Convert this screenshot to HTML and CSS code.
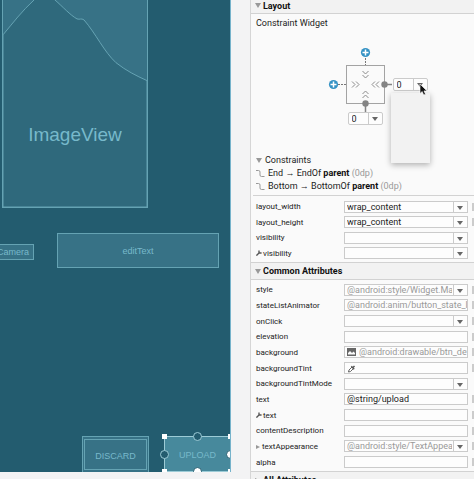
FILE: index.html
```html
<!DOCTYPE html>
<html lang="en">
<head>
    <meta charset="UTF-8">
    <title>Layout Editor</title>
    <link rel="stylesheet" href="styles.css">
</head>
<body>
    <main class="surface">
        <div class="blueprint">
            <div class="node image-view">
                <svg class="mountain" viewBox="0 0 144 208" preserveAspectRatio="none">
                    <path d="M0 35C10 23 19 11 31 0L40 -10L52 0C60 7 67 15 74 19C77 20 78 18 81 20C93 34 101 52 113 63C123 71 133 76 144 81V208H0Z"/>
                </svg>
                <span class="image-label">ImageView</span>
            </div>
            <button class="node camera">Camera</button>
            <input class="node edit-text" type="text" value="editText" aria-label="editText">
            <div class="node discard"><button>DISCARD</button></div>
            <div class="node upload">
                <button>UPLOAD</button>
                <i class="corner top left"></i>
                <i class="corner top right"></i>
                <i class="corner bottom left"></i>
                <i class="corner bottom right"></i>
                <i class="anchor anchor-top"></i>
                <i class="anchor anchor-left"></i>
                <i class="anchor anchor-right connected"></i>
                <i class="anchor anchor-bottom connected"></i>
            </div>
        </div>
    </main>

    <aside class="panel">
        <h2 class="section first"><span class="tri"></span>Layout</h2>
        <div class="widget-title">Constraint Widget</div>

        <div class="widget">
            <svg class="widget-box" width="65" height="66" viewBox="0 0 65 66">
                <rect x="18.500" y="19.500" width="38" height="38" fill="none" stroke="#a3a3a3"/>
                <path d="M37.500 12V19M10 38.500H18" stroke="#777" stroke-dasharray="2 1"/>
                <path d="M37.500 58V66M57 38.500H64" stroke="#848484" stroke-width="1.500"/>
                <circle cx="37.500" cy="57.500" r="3.200" fill="#848484"/>
                <circle cx="56.500" cy="38.500" r="3.200" fill="#848484"/>
                <circle cx="37.500" cy="6.500" r="4.600" fill="#3592c4"/>
                <circle cx="5.500" cy="38.500" r="4.600" fill="#3592c4"/>
                <path d="M37.500 3.500V9.500M34.500 6.500H40.500M5.500 35.500V41.500M2.500 38.500H8.500" stroke="#fff" stroke-width="1.500"/>
                <path d="M34.500 25L37.500 28L40.500 25M34.500 29L37.500 32L40.500 29M34.500 48L37.500 45L40.500 48M34.500 52L37.500 49L40.500 52M24 35.500L27 38.500L24 41.500M28 35.500L31 38.500L28 41.500M47 35.500L44 38.500L47 41.500M51 35.500L48 38.500L51 41.500" fill="none" stroke="#8c8c8c"/>
            </svg>
            <div class="combo margin-right">
                <select aria-label="Right margin"><option>0</option></select>
                <div class="popup"></div>
                <svg class="cursor" width="9" height="13" viewBox="0 0 9 13">
                    <path d="M1 1V10.500L3.200 8.500L4.700 12L6.500 11.200L5 7.900H8Z" fill="#111" stroke="#fff" stroke-width="0.600"/>
                </svg>
            </div>
            <div class="combo margin-bottom">
                <select aria-label="Bottom margin"><option>0</option></select>
            </div>
        </div>

        <div class="constraints">
            <div class="constraints-title"><span class="tri"></span>Constraints</div>
            <div class="constraint">
                <svg width="9" height="9" viewBox="0 0 9 9"><path d="M0 1.500H2.500Q4 1.500 4 3V6Q4 7.500 5.500 7.500H8.500" fill="none" stroke="#999"/></svg>
                <span>End → EndOf <b>parent</b> <span class="dim">(0dp)</span></span>
            </div>
            <div class="constraint">
                <svg width="9" height="9" viewBox="0 0 9 9"><path d="M0 1.500H2.500Q4 1.500 4 3V6Q4 7.500 5.500 7.500H8.500" fill="none" stroke="#999"/></svg>
                <span>Bottom → BottomOf <b>parent</b> <span class="dim">(0dp)</span></span>
            </div>
        </div>

        <div class="rows layout-rows">
            <div class="row">
                <label for="layout-width">layout_width</label>
                <div class="combo"><select id="layout-width"><option>wrap_content</option></select></div>
                <span class="flag"></span>
            </div>
            <div class="row">
                <label for="layout-height">layout_height</label>
                <div class="combo"><select id="layout-height"><option>wrap_content</option></select></div>
                <span class="flag"></span>
            </div>
            <div class="row">
                <label for="visibility">visibility</label>
                <div class="combo"><select id="visibility"><option></option></select></div>
            </div>
            <div class="row">
                <label for="tools-visibility"><svg class="wrench" width="6" height="6" viewBox="0 0 7 7"><path d="M0.500 6.500L3.500 3.500M3.500 0.500V3.500H6.500" fill="none" stroke="#555" stroke-width="1.600"/></svg>visibility</label>
                <div class="combo"><select id="tools-visibility"><option></option></select></div>
            </div>
        </div>

        <h2 class="section"><span class="tri"></span>Common Attributes</h2>

        <div class="rows common-rows">
            <div class="row">
                <label for="style">style</label>
                <div class="combo dim"><select id="style"><option>@android:style/Widget.Material.Button</option></select></div>
                <span class="flag"></span>
            </div>
            <div class="row">
                <label for="state-list">stateListAnimator</label>
                <input id="state-list" type="text" placeholder="@android:anim/button_state_list_anim">
                <span class="flag"></span>
            </div>
            <div class="row">
                <label for="on-click">onClick</label>
                <div class="combo"><select id="on-click"><option></option></select></div>
                <span class="flag"></span>
            </div>
            <div class="row">
                <label for="elevation">elevation</label>
                <input id="elevation" type="text">
                <span class="flag"></span>
            </div>
            <div class="row">
                <label for="background">background</label>
                <div class="icon-field">
                    <svg width="9" height="8" viewBox="0 0 9 8"><path d="M0 0H9V8H0Z" fill="#666"/><path d="M1 6.500V5L3 3L5 5L6.500 3.500L8 5V6.500Z" fill="#fafafa"/></svg>
                    <input id="background" type="text" placeholder="@android:drawable/btn_default_material">
                </div>
                <span class="flag"></span>
            </div>
            <div class="row">
                <label for="background-tint">backgroundTint</label>
                <div class="icon-field">
                    <svg width="9" height="9" viewBox="0 0 9 8"><path d="M1.500 7.500L2 5.500L5 2.500L6.500 4L3.500 7Z" fill="none" stroke="#555" stroke-width="0.900"/><path d="M4.300 1.800L7.200 4.700M5.800 3.200L7.500 1.500" stroke="#555" stroke-width="1.500"/></svg>
                    <input id="background-tint" type="text">
                </div>
                <span class="flag"></span>
            </div>
            <div class="row">
                <label for="tint-mode">backgroundTintMode</label>
                <div class="combo"><select id="tint-mode"><option></option></select></div>
            </div>
            <div class="row">
                <label for="text">text</label>
                <input id="text" type="text" value="@string/upload">
                <span class="flag"></span>
            </div>
            <div class="row">
                <label for="tools-text"><svg class="wrench" width="6" height="6" viewBox="0 0 7 7"><path d="M0.500 6.500L3.500 3.500M3.500 0.500V3.500H6.500" fill="none" stroke="#555" stroke-width="1.600"/></svg>text</label>
                <input id="tools-text" type="text">
                <span class="flag"></span>
            </div>
            <div class="row">
                <label for="description">contentDescription</label>
                <input id="description" type="text">
                <span class="flag"></span>
            </div>
            <div class="row">
                <label for="appearance"><span class="tri closed"></span>textAppearance</label>
                <div class="combo dim"><select id="appearance"><option>@android:style/TextAppearance.Material</option></select></div>
                <span class="flag"></span>
            </div>
            <div class="row">
                <label for="alpha">alpha</label>
                <input id="alpha" type="text">
                <span class="flag"></span>
            </div>
        </div>

        <h2 class="section"><span class="tri closed"></span>All Attributes</h2>
    </aside>
</body>
</html>
```

FILE: styles.css
```css
:root {
    --blueprint: #235c6f;
    --node: #377286;
    --node-line: #65a3b3;
    --node-text: #77b9cb;
    --panel: #fafafa;
    --line: #cbcbcb;
}

* {
    margin: 0;
    padding: 0;
    box-sizing: border-box;
}

body {
    display: flex;
    height: 100vh;
    overflow: hidden;
    background-color: #f3f3f4;
    font-family: Roboto, "Liberation Sans", sans-serif;
    font-size: 9px;
    color: #222;
}

button,
input,
select {
    font: inherit;
    color: inherit;
    border-radius: 0;
    outline: none;
}

/* design surface */
.surface {
    flex: 1;
    padding: 0 19px 7px 0;
}

.blueprint {
    position: relative;
    height: 100%;
    overflow: hidden;
    background-color: var(--blueprint);
    border-right: 1px solid #76b3cb;
    font-family: "Liberation Sans", sans-serif;
    color: var(--node-text);
}

.node {
    position: absolute;
    background-color: var(--node);
    border: 1px solid var(--node-line);
}

.image-view {
    left: 2px;
    top: -1px;
    width: 146px;
    height: 209px;
    display: flex;
    justify-content: center;
}

.mountain {
    position: absolute;
    width: 100%;
    height: 100%;
    fill: #2f697c;
    stroke: var(--node-line);
}

.image-label {
    position: relative;
    margin-top: 124px;
    font-size: 19px;
    line-height: 22px;
}

.camera {
    left: -10px;
    top: 244px;
    width: 44px;
    height: 16px;
    padding-right: 4px;
    text-align: right;
}

.edit-text {
    left: 57px;
    top: 233px;
    width: 162px;
    height: 35px;
    text-align: center;
}

.discard {
    left: 82px;
    bottom: -1px;
    width: 67px;
    height: 37px;
    padding: 2px 1px;
}

.discard button,
.upload button {
    width: 100%;
    height: 100%;
    padding-top: 2px;
    background: none;
    border: 1px solid var(--node-line);
}

.upload {
    left: 164px;
    bottom: 0;
    width: 67px;
    height: 36px;
    background-color: #47899c;
    border-color: #9ccbd6;
}

.upload button {
    border: none;
}

.corner {
    position: absolute;
    width: 5px;
    height: 5px;
    background-color: #fff;
}

.top { top: -3px; }
.bottom { bottom: -3px; }
.left { left: -3px; }
.right { right: -3px; }

.anchor {
    position: absolute;
    width: 9px;
    height: 9px;
    border: 1px solid #9ccbd6;
    border-radius: 50%;
    background-color: var(--blueprint);
}

.connected {
    background-color: #fff;
    border-color: var(--blueprint);
}

.anchor-top { top: -5px; left: 28px; }
.anchor-bottom { bottom: -5px; left: 28px; }
.anchor-left { top: 13px; left: -5px; }
.anchor-right { top: 13px; right: -5px; }

/* attributes panel */
.panel {
    width: 224px;
    height: 100%;
    overflow: hidden;
    background-color: var(--panel);
    border-left: 1px solid #d6d6d6;
}

.section {
    display: flex;
    align-items: center;
    height: 18px;
    padding-left: 4px;
    background-color: #f2f2f2;
    border-top: 1px solid #d2d2d2;
    border-bottom: 1px solid #d2d2d2;
    font-size: 9px;
    font-weight: 700;
    color: #111;
}

.section.first {
    height: 14px;
    padding-bottom: 2px;
    border-top: none;
}

.tri {
    display: inline-block;
    margin-right: 2px;
    border: 3px solid transparent;
    border-top: 5px solid #999;
    border-bottom: none;
}

.tri.closed {
    border: 2px solid transparent;
    border-left: 4px solid #999;
    border-right: none;
}

.section .tri.closed {
    margin-right: 4px;
}

.widget-title {
    padding: 3px 5px;
    line-height: 12px;
}

.widget {
    display: grid;
    grid-template-columns: 65px 35px;
    justify-content: center;
    padding: 14px 0 0 30px;
}

.combo {
    position: relative;
    flex: 1;
    min-width: 0;
}

.combo select {
    display: block;
    width: 100%;
    height: 13px;
    padding: 0 15px 0 2px;
    appearance: none;
    background-color: #fdfdfd;
    border: 1px solid var(--line);
}

/* arrow button at the right end of a combo */
.combo::before {
    content: "";
    position: absolute;
    right: 14px;
    top: 1px;
    bottom: 1px;
    border-left: 1px solid var(--line);
}

.combo::after {
    content: "";
    position: absolute;
    right: 5px;
    top: 5px;
    border: 3px solid transparent;
    border-top: 4px solid #666;
    border-bottom: none;
}

.margin-right {
    height: 13px;
    margin-top: 32px;
}

.margin-bottom {
    width: 35px;
    margin-left: 20px;
}

.widget select {
    padding-left: 3px;
    border-radius: 2px;
}

.popup {
    position: absolute;
    left: -2px;
    top: 15px;
    width: 39px;
    height: 70px;
    background-color: #f2f2f2;
    box-shadow: 0 2px 6px rgba(0, 0, 0, 0.3);
}

.cursor {
    position: absolute;
    z-index: 1;
    left: 26px;
    top: 5px;
}

.constraints {
    margin: 29px 0 0 2px;
    padding: 0 0 2px 3px;
    border-bottom: 1px solid #d2d2d2;
    line-height: 13px;
}

.constraints-title .tri {
    margin-right: 3px;
}

.constraint {
    display: flex;
    align-items: center;
    gap: 3px;
}

.constraint b {
    font-weight: 700;
    color: #111;
}

.dim {
    color: #999;
}

.layout-rows {
    padding: 3px 0 1px 5px;
}

.common-rows {
    padding: 2px 0 1px 5px;
}

.row {
    display: flex;
    align-items: center;
    height: 16px;
}

.layout-rows .row:nth-child(odd),
.common-rows .row:nth-child(3n + 1) {
    height: 15px;
}

.row label {
    width: 88px;
    font-size: 8px;
}

.row .combo,
.row > input,
.icon-field {
    flex: 1;
    min-width: 0;
    margin-right: 6px;
}

.row > input,
.icon-field {
    height: 12px;
    padding-left: 2px;
    background-color: #fdfdfd;
    border: 1px solid var(--line);
}

.row .combo select {
    height: 12px;
}

.row:has(.flag) .combo,
.row:has(.flag) > input,
.row:has(.flag) .icon-field {
    margin-right: 4px;
}

.icon-field {
    display: flex;
    align-items: center;
    gap: 3px;
}

.icon-field input {
    flex: 1;
    min-width: 0;
    height: 10px;
    background: none;
    border: none;
}

input::placeholder {
    color: #999;
}

.flag {
    width: 2px;
    height: 8px;
    background-color: #ccc;
}

.wrench {
    margin-right: 1px;
}
```
